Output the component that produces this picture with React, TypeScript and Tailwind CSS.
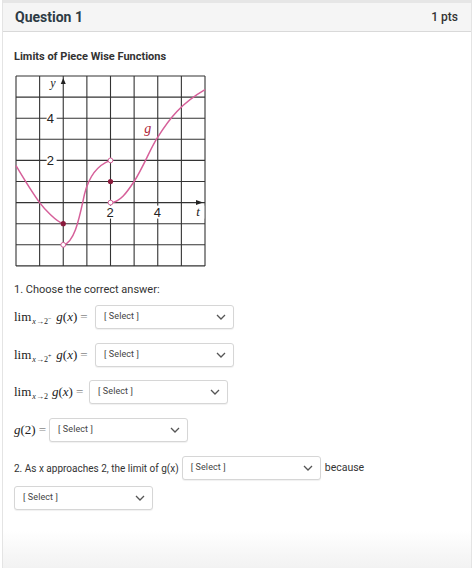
import React from "react";

const Chevron = () => (
  <svg width="10" height="6" viewBox="0 0 10 6" className="shrink-0">
    <path d="M1 1 L5 5 L9 1" fill="none" stroke="#555" strokeWidth="1.3" />
  </svg>
);

const Select = ({ w, className = "" }: { w: string; className?: string }) => (
  <div
    className={`${w} h-[24px] flex items-center justify-between pl-[8px] pr-[7px] bg-white border border-[#d6d6d6] rounded-[3px] shadow-[0_1px_1px_rgba(0,0,0,0.06)] font-['Roboto',sans-serif] not-italic ${className}`}
  >
    <span className="text-[9px] text-[#444] tracking-[0.1px]">[ Select ]</span>
    <Chevron />
  </div>
);

const Lim = ({ sup }: { sup?: string }) => (
  <span className="inline-flex items-baseline">
    <span>lim</span>
    <span className="text-[8px] relative top-[3px] ml-[1px] italic">
      x<span className="not-italic">→2</span>
      {sup ? <span className="text-[6px] relative -top-[4px] not-italic">{sup}</span> : null}
    </span>
  </span>
);

const Graph = () => {
  const x0 = 2,
    y0 = 3,
    cw = 23.625,
    ch = 21.1;
  const X = (t: number) => x0 + (t + 2) * cw;
  const Y = (v: number) => y0 + (6 - v) * ch;
  const vlines = Array.from({ length: 9 }, (_, i) => x0 + i * cw);
  const hlines = Array.from({ length: 10 }, (_, i) => y0 + i * ch);
  const pink = "#d6609a";
  const p1 = `M ${X(-2)} ${Y(1.75)} C ${X(-1.6)} ${Y(1)}, ${X(-1.2)} ${Y(0.3)}, ${X(-1)} ${Y(0)} S ${X(-0.3)} ${Y(-0.9)}, ${X(0)} ${Y(-1)}`;
  const p2 = `M ${X(0)} ${Y(-2)} C ${X(0.5)} ${Y(-1.9)}, ${X(0.7)} ${Y(-0.6)}, ${X(0.9)} ${Y(0.4)} C ${X(1.1)} ${Y(1.3)}, ${X(1.5)} ${Y(1.8)}, ${X(2)} ${Y(2)}`;
  const p3 = `M ${X(2)} ${Y(0)} C ${X(2.4)} ${Y(0)}, ${X(2.7)} ${Y(0.5)}, ${X(3)} ${Y(1)} C ${X(3.4)} ${Y(1.7)}, ${X(3.7)} ${Y(2.6)}, ${X(4)} ${Y(3.1)} C ${X(4.5)} ${Y(4)}, ${X(5)} ${Y(4.7)}, ${X(6)} ${Y(5.35)}`;
  return (
    <svg width="200" height="202" viewBox="0 0 200 202" className="block">
      {vlines.map((x, i) => (
        <line key={"v" + i} x1={x} y1={y0} x2={x} y2={y0 + 9 * ch} stroke="#333" strokeWidth="1.1" />
      ))}
      {hlines.map((y, i) => (
        <line key={"h" + i} x1={x0} y1={y} x2={x0 + 8 * cw} y2={y} stroke="#333" strokeWidth="1.1" />
      ))}
      <path d={`M ${X(0)} ${y0 + 2} l -2.5 6 l 5 0 z`} fill="#222" />
      <rect x={X(0) - 14} y={y0 + 2} width="10" height="12" fill="white" />
      <text x={X(0) - 13} y={y0 + 11} fontFamily="'Liberation Serif', serif" fontStyle="italic" fontSize="12" fill="#222">
        y
      </text>
      <path d={`M ${x0 + 8 * cw - 2} ${Y(0)} l -7 -2.5 l 0 5 z`} fill="#222" />
      <rect x={X(5.8) - 6} y={Y(0) + 3} width="10" height="13" fill="white" />
      <text x={X(5.8) - 4} y={Y(0) + 13} fontFamily="'Liberation Serif', serif" fontStyle="italic" fontSize="13" fill="#222">
        t
      </text>
      <rect x={X(-1) + 7} y={Y(4) - 7} width="10" height="14" fill="white" />
      <text x={X(-1) + 7} y={Y(4) + 5} fontFamily="'Liberation Sans', sans-serif" fontSize="13" fill="#222">
        4
      </text>
      <rect x={X(-1) + 7} y={Y(2) - 7} width="10" height="14" fill="white" />
      <text x={X(-1) + 7} y={Y(2) + 5} fontFamily="'Liberation Sans', sans-serif" fontSize="13" fill="#222">
        2
      </text>
      <rect x={X(2) - 5} y={Y(0) + 3} width="10" height="13" fill="white" />
      <text x={X(2) - 4} y={Y(0) + 14} fontFamily="'Liberation Sans', sans-serif" fontSize="13" fill="#222">
        2
      </text>
      <rect x={X(4) - 5} y={Y(0) + 3} width="10" height="13" fill="white" />
      <text x={X(4) - 4} y={Y(0) + 14} fontFamily="'Liberation Sans', sans-serif" fontSize="13" fill="#222">
        4
      </text>
      <rect x={X(3.6) - 5} y={Y(3.3) - 9} width="10" height="12" fill="white" />
      <text x={X(3.6) - 4} y={Y(3.3)} fontFamily="'Liberation Serif', serif" fontStyle="italic" fontSize="14" fill="#b0283c">
        g
      </text>
      <path d={p1} fill="none" stroke={pink} strokeWidth="1.5" />
      <path d={p2} fill="none" stroke={pink} strokeWidth="1.5" />
      <path d={p3} fill="none" stroke={pink} strokeWidth="1.5" />
      <circle cx={X(0)} cy={Y(-1)} r="2.6" fill="#8a1a3c" />
      <circle cx={X(2)} cy={Y(1)} r="2.6" fill="#8a1a3c" />
      <circle cx={X(0)} cy={Y(-2)} r="2.4" fill="white" stroke={pink} strokeWidth="1" />
      <circle cx={X(2)} cy={Y(2)} r="2.4" fill="white" stroke={pink} strokeWidth="1" />
      <circle cx={X(2)} cy={Y(0)} r="2.4" fill="white" stroke={pink} strokeWidth="1" />
    </svg>
  );
};

export default function App() {
  return (
    <div className="w-[474px] h-[568px] bg-white overflow-hidden font-['Roboto',sans-serif] text-[#333]">
      <div className="h-full mx-[2px] border-x border-[#e4e4e4] flex flex-col">
        <div className="h-[32px] bg-[#f5f5f5] border-t-[3px] border-t-[#e6e6e6] border-b border-b-[#d9d9d9] flex items-center justify-between pl-[12px] pr-[13px]">
          <span className="text-[14px] font-bold text-[#2d3b45]">Question 1</span>
          <span className="text-[12px] font-medium text-[#333]">1 pts</span>
        </div>
        <div className="flex-1 pl-[11px] pt-[18px] bg-gradient-to-b from-white from-[93%] to-[#f2f2f2]">
          <div className="text-[11px] font-bold text-[#333] leading-[14px]">Limits of Piece Wise Functions</div>
          <div className="mt-[9px]">
            <Graph />
          </div>
          <div className="mt-[8px] text-[11px] leading-[14px]">1. Choose the correct answer:</div>

          <div className="mt-[8px] flex items-center font-['Liberation_Serif',serif] text-[13px] text-[#222]">
            <span className="w-[81px] flex items-center">
              <Lim sup="−" />
              <span className="italic ml-[5px]">g</span>(<span className="italic">x</span>)<span className="ml-[3px] text-[#888]">=</span>
            </span>
            <Select w="w-[139px]" />
          </div>

          <div className="mt-[14px] flex items-center font-['Liberation_Serif',serif] text-[13px] text-[#222]">
            <span className="w-[81px] flex items-center">
              <Lim sup="+" />
              <span className="italic ml-[5px]">g</span>(<span className="italic">x</span>)<span className="ml-[3px] text-[#888]">=</span>
            </span>
            <Select w="w-[139px]" />
          </div>

          <div className="mt-[13px] flex items-center font-['Liberation_Serif',serif] text-[13px] text-[#222]">
            <span className="w-[75px] flex items-center">
              <Lim />
              <span className="italic ml-[4px]">g</span>(<span className="italic">x</span>)<span className="ml-[3px] text-[#888]">=</span>
            </span>
            <Select w="w-[139px]" />
          </div>

          <div className="mt-[14px] flex items-center font-['Liberation_Serif',serif] text-[13px] text-[#222]">
            <span className="w-[35px] flex items-center">
              <span className="italic">g</span>(2)<span className="ml-[3px] text-[#888]">=</span>
            </span>
            <Select w="w-[139px]" />
          </div>

          <div className="mt-[14px] flex items-center text-[10px]">
            <span className="whitespace-nowrap mr-[3px]">2. As x approaches 2, the limit of g(x)</span>
            <Select w="w-[139px]" />
            <span className="ml-[4px] text-[10.5px]">because</span>
          </div>

          <div className="mt-[6px] flex items-center">
            <Select w="w-[139px]" />
          </div>
        </div>
      </div>
    </div>
  );
}
